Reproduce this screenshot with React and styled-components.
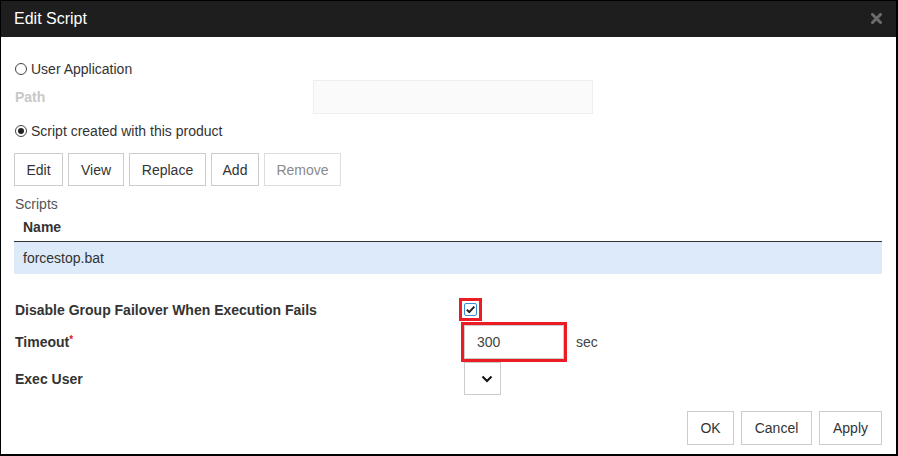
import React from "react";
import styled, { createGlobalStyle } from "styled-components";

const Global = createGlobalStyle`
  html, body { margin: 0; padding: 0; background: #fff; }
  body { font-family: "Liberation Sans", Arial, sans-serif; font-size: 14px; color: #333; }
  * { box-sizing: border-box; }
`;

const Dialog = styled.div`
  width: 898px;
  height: 456px;
  border: 1px solid #000;
  border-right-width: 2px;
  border-bottom-width: 2px;
  display: flex;
  flex-direction: column;
  background: #fff;
  overflow: hidden;
`;

const Header = styled.div`
  height: 37px;
  margin: -1px -2px 0 -1px;
  background: #1e1e1e;
  display: flex;
  align-items: center;
  justify-content: space-between;
  padding: 0 16px 0 14px;
  flex-shrink: 0;
`;

const Title = styled.div`
  color: #fff;
  font-size: 16px;
  line-height: 20px;
`;

const Close = styled.svg`
  width: 11px;
  height: 11px;
  display: block;
`;

const Body = styled.div`
  padding: 22px 14px 0 13px;
  display: flex;
  flex-direction: column;
`;

const RadioRow = styled.label`
  height: 20px;
  display: flex;
  align-items: center;
  gap: 4px;
  margin-top: ${(p) => p.$mt || 0}px;
`;

const RadioDot = styled.span`
  width: 12px;
  height: 12px;
  border-radius: 50%;
  border: 1px solid #444;
  background: #fff;
  display: flex;
  align-items: center;
  justify-content: center;
  margin-left: 1px;
  &::after {
    content: "";
    display: ${(p) => (p.$on ? "block" : "none")};
    width: 6px;
    height: 6px;
    border-radius: 50%;
    background: #222;
  }
`;

const PathRow = styled.div`
  height: 34px;
  margin-top: 1px;
  display: flex;
  align-items: center;
`;

const PathLabel = styled.div`
  width: 299px;
  font-weight: bold;
  color: #c8c8c8;
  padding-left: 1px;
`;

const PathInput = styled.div`
  width: 280px;
  height: 34px;
  background: #fafafa;
  border: 1px solid #eeeeee;
`;

const Toolbar = styled.div`
  display: flex;
  gap: ${(p) => (p.$end ? 7 : 5)}px;
  margin-top: ${(p) => p.$mt || 0}px;
  justify-content: ${(p) => (p.$end ? "flex-end" : "flex-start")};
`;

const Button = styled.button`
  height: ${(p) => (p.$tall ? 34 : 33)}px;
  width: ${(p) => p.$w}px;
  padding: 0;
  text-align: center;
  background: #fff;
  border: 1px solid ${(p) => (p.disabled ? "#dedede" : "#cccccc")};
  color: ${(p) => (p.disabled ? "#8a8a8a" : "#333")};
  font-family: "Liberation Sans", Arial, sans-serif;
  font-size: 14px;
  cursor: pointer;
`;

const Caption = styled.div`
  height: 20px;
  line-height: 20px;
  margin-top: 8px;
  color: #555;
  padding-left: 1px;
`;

const Table = styled.div`
  display: flex;
  flex-direction: column;
`;

const HeadCell = styled.div`
  height: 28px;
  padding: 0 9px 1px;
  display: flex;
  align-items: center;
  font-weight: bold;
  border-bottom: 1px solid #333;
`;

const Row = styled.div`
  height: 32px;
  padding: 0 9px;
  display: flex;
  align-items: center;
  background: #dceafa;
`;

const Field = styled.div`
  display: flex;
  align-items: center;
  height: ${(p) => p.$h}px;
  margin-top: ${(p) => p.$mt || 0}px;
`;

const FieldLabel = styled.div`
  width: 450px;
  font-weight: bold;
  padding-left: 1px;
  flex-shrink: 0;
`;

const Req = styled.sup`
  color: #e02020;
  font-size: 10px;
  vertical-align: 4px;
  line-height: 0;
`;

const Highlight = styled.div`
  border: 3px solid #ec1c24;
  display: flex;
  align-items: center;
  margin-left: ${(p) => p.$ml || 0}px;
  padding: ${(p) => p.$pad || 0}px;
  background: #fff;
`;

const CheckBox = styled.span`
  width: 13px;
  height: 13px;
  border: 1px solid #3b8fd9;
  border-radius: 2px;
  background: #fff;
  display: flex;
  align-items: center;
  justify-content: center;
`;

const TextInput = styled.div`
  width: 100px;
  height: 34px;
  border: 1px solid #cccccc;
  padding-left: 12px;
  display: flex;
  align-items: center;
  color: #444;
`;

const Unit = styled.span`
  margin-left: 9px;
  color: #444;
`;

const Select = styled.div`
  width: 37px;
  height: 33px;
  border: 1px solid #cccccc;
  display: flex;
  align-items: center;
  justify-content: flex-end;
  padding-right: 7px;
`;

export default function App() {
  return (
    <>
      <Global />
      <Dialog>
        <Header>
          <Title>Edit Script</Title>
          <Close viewBox="0 0 11 11">
            <path d="M1.5 1.5 L9.5 9.5 M9.5 1.5 L1.5 9.5" stroke="#6b6b6b" strokeWidth="3" strokeLinecap="square" />
          </Close>
        </Header>
        <Body>
          <RadioRow>
            <RadioDot />
            User Application
          </RadioRow>
          <PathRow>
            <PathLabel>Path</PathLabel>
            <PathInput />
          </PathRow>
          <RadioRow $mt={7}>
            <RadioDot $on />
            Script created with this product
          </RadioRow>
          <Toolbar $mt={12}>
            <Button $w={49}>Edit</Button>
            <Button $w={56}>View</Button>
            <Button $w={77}>Replace</Button>
            <Button $w={48}>Add</Button>
            <Button $w={77} disabled>Remove</Button>
          </Toolbar>
          <Caption>Scripts</Caption>
          <Table>
            <HeadCell>Name</HeadCell>
            <Row>forcestop.bat</Row>
          </Table>
          <Field $h={23} $mt={24}>
            <FieldLabel>Disable Group Failover When Execution Fails</FieldLabel>
            <Highlight $ml={-5} $pad={2}>
              <CheckBox>
                <svg width="11" height="11" viewBox="0 0 11 11">
                  <path d="M1.8 5.6 L4.3 8.1 L9.3 2.6" fill="none" stroke="#222" strokeWidth="2" />
                </svg>
              </CheckBox>
            </Highlight>
          </Field>
          <Field $h={40} $mt={1}>
            <FieldLabel>
              Timeout<Req>*</Req>
            </FieldLabel>
            <Highlight $ml={-3}>
              <TextInput>300</TextInput>
            </Highlight>
            <Unit>sec</Unit>
          </Field>
          <Field $h={33}>
            <FieldLabel>Exec User</FieldLabel>
            <Select>
              <svg width="12" height="8" viewBox="0 0 12 8">
                <path d="M1.5 1.5 L6 6 L10.5 1.5" fill="none" stroke="#111" strokeWidth="2" />
              </svg>
            </Select>
          </Field>
          <Toolbar $mt={16} $end>
            <Button $tall $w={47}>OK</Button>
            <Button $tall $w={71}>Cancel</Button>
            <Button $tall $w={63}>Apply</Button>
          </Toolbar>
        </Body>
      </Dialog>
    </>
  );
}
